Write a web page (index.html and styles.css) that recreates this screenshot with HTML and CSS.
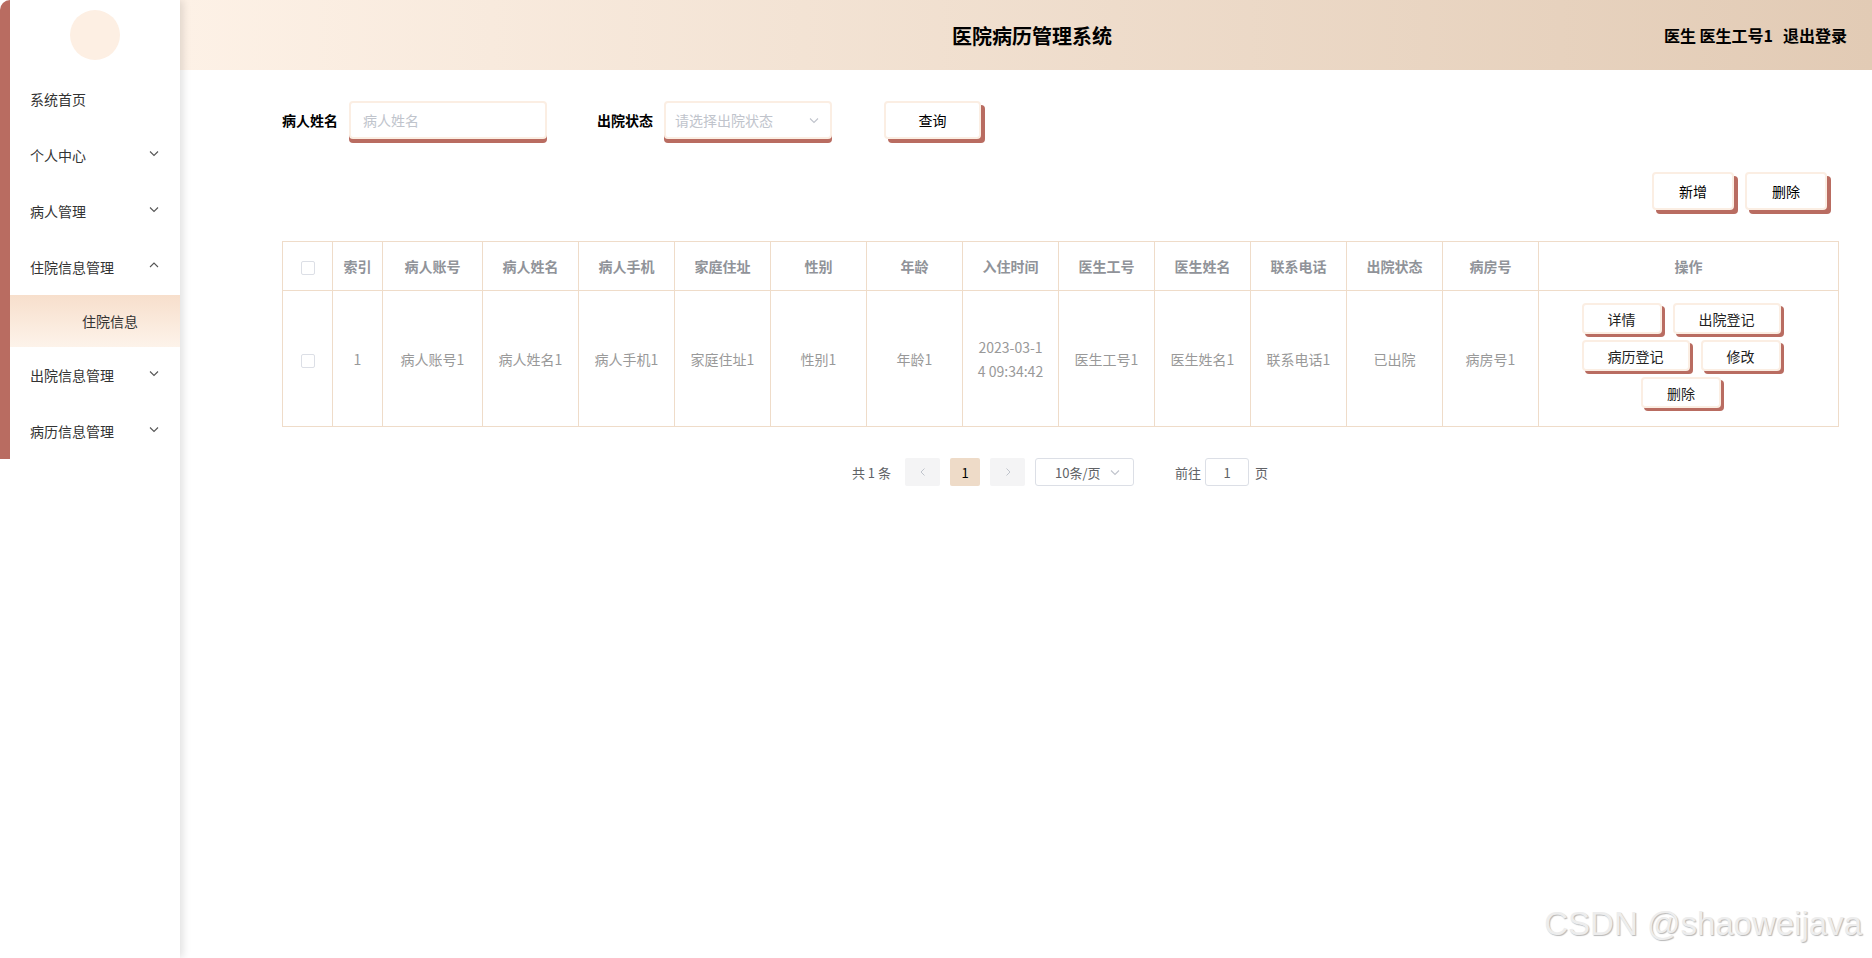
FILE: index.html
```html
<!DOCTYPE html>
<html lang="zh-CN">
<head>
    <meta charset="UTF-8">
    <title>医院病历管理系统</title>
    <link rel="stylesheet" href="styles.css">
</head>
<body>
    <div class="app">
        <!-- 左侧菜单 -->
        <aside class="sidebar">
            <div class="side-inner">
                <div class="logo"><div class="logo-circle"></div></div>
                <ul class="menu">
                    <li class="menu-item">系统首页</li>
                    <li class="menu-item">个人中心
                        <svg class="arrow" viewBox="0 0 12 12"><path d="M2 4.5 6 8.5 10 4.5"/></svg>
                    </li>
                    <li class="menu-item">病人管理
                        <svg class="arrow" viewBox="0 0 12 12"><path d="M2 4.5 6 8.5 10 4.5"/></svg>
                    </li>
                    <li class="menu-item">住院信息管理
                        <svg class="arrow" viewBox="0 0 12 12"><path d="M2 8 6 4 10 8"/></svg>
                    </li>
                    <li class="sub-item">住院信息</li>
                    <li class="menu-item">出院信息管理
                        <svg class="arrow" viewBox="0 0 12 12"><path d="M2 4.5 6 8.5 10 4.5"/></svg>
                    </li>
                    <li class="menu-item">病历信息管理
                        <svg class="arrow" viewBox="0 0 12 12"><path d="M2 4.5 6 8.5 10 4.5"/></svg>
                    </li>
                </ul>
            </div>
        </aside>

        <div class="main">
            <header class="topbar">
                <div></div>
                <h1 class="title">医院病历管理系统</h1>
                <div class="user"><span>医生</span> <span>医生工号1</span><span class="logout">退出登录</span></div>
            </header>

            <div class="content">
                <!-- 查询条件 -->
                <form class="search">
                    <label class="search-label">病人姓名</label>
                    <input class="search-input" type="text" placeholder="病人姓名">
                    <label class="search-label gap">出院状态</label>
                    <div class="search-select">
                        <span>请选择出院状态</span>
                        <svg class="sel-arrow" viewBox="0 0 12 12"><path d="M2 4.5 6 8.5 10 4.5"/></svg>
                    </div>
                    <button type="button" class="btn btn-query">查询</button>
                </form>

                <div class="toolbar">
                    <button type="button" class="btn btn-tool">新增</button>
                    <button type="button" class="btn btn-tool">删除</button>
                </div>

                <!-- 数据表格 -->
                <table class="grid">
                    <colgroup>
                        <col style="width:50px"><col style="width:50px"><col style="width:100px">
                        <col style="width:96px"><col style="width:96px"><col style="width:96px">
                        <col style="width:96px"><col style="width:96px"><col style="width:96px">
                        <col style="width:96px"><col style="width:96px"><col style="width:96px">
                        <col style="width:96px"><col style="width:96px"><col style="width:300px">
                    </colgroup>
                    <thead>
                        <tr>
                            <th><span class="check"></span></th>
                            <th>索引</th>
                            <th>病人账号</th>
                            <th>病人姓名</th>
                            <th>病人手机</th>
                            <th>家庭住址</th>
                            <th>性别</th>
                            <th>年龄</th>
                            <th>入住时间</th>
                            <th>医生工号</th>
                            <th>医生姓名</th>
                            <th>联系电话</th>
                            <th>出院状态</th>
                            <th>病房号</th>
                            <th>操作</th>
                        </tr>
                    </thead>
                    <tbody>
                        <tr>
                            <td><span class="check"></span></td>
                            <td>1</td>
                            <td>病人账号1</td>
                            <td>病人姓名1</td>
                            <td>病人手机1</td>
                            <td>家庭住址1</td>
                            <td>性别1</td>
                            <td>年龄1</td>
                            <td class="wrap">2023-03-14 09:34:42</td>
                            <td>医生工号1</td>
                            <td>医生姓名1</td>
                            <td>联系电话1</td>
                            <td>已出院</td>
                            <td>病房号1</td>
                            <td class="ops-cell">
                                <div class="ops">
                                    <button type="button" class="op-btn">详情</button>
                                    <button type="button" class="op-btn">出院登记</button>
                                    <button type="button" class="op-btn">病历登记</button>
                                    <button type="button" class="op-btn">修改</button>
                                    <button type="button" class="op-btn">删除</button>
                                </div>
                            </td>
                        </tr>
                    </tbody>
                </table>

                <!-- 分页 -->
                <div class="pager">
                    <span class="total">共 1 条</span>
                    <span class="pg-btn pg-side"><svg viewBox="0 0 12 12"><path d="M7.5 2.5 4 6 7.5 9.5"/></svg></span>
                    <span class="pg-btn pg-active">1</span>
                    <span class="pg-btn pg-side"><svg viewBox="0 0 12 12"><path d="M4.5 2.5 8 6 4.5 9.5"/></svg></span>
                    <span class="pg-sizes">10条/页
                        <svg class="sel-arrow" viewBox="0 0 12 12"><path d="M2 4.5 6 8.5 10 4.5"/></svg>
                    </span>
                    <span class="jump">前往</span>
                    <span class="jump-input">1</span>
                    <span class="jump-unit">页</span>
                </div>
            </div>
        </div>

        <div class="watermark">CSDN @shaoweijava</div>
    </div>
</body>
</html>
```

FILE: styles.css
```css
/* 基础 */
:root {
    --red: #b96c61;
    --peach: #fbeee3;
    --line: #efdcc9;
    --gray: #909399;
}

* {
    box-sizing: border-box;
}

body {
    margin: 0;
    font-family: "Noto Sans CJK SC", "Microsoft YaHei", sans-serif;
    color: #333;
    background: #fff;
}

.app {
    display: flex;
    min-height: 100vh;
    position: relative;
}

/* 侧边栏 */
.sidebar {
    width: 180px;
    flex-shrink: 0;
    background: #fff;
    box-shadow: 3px 0 8px rgba(0, 0, 0, 0.12);
    position: relative;
    z-index: 2;
}

.side-inner {
    border-left: 10px solid var(--red);
    border-top-left-radius: 10px;
}

.logo {
    height: 71px;
    padding-top: 10px;
    display: flex;
    justify-content: center;
}

.logo-circle {
    width: 50px;
    height: 50px;
    border-radius: 50%;
    background: #fdefe3;
}

.menu {
    list-style: none;
    margin: 0;
    padding: 0;
}

.menu-item {
    height: 56px;
    padding: 0 20px;
    display: flex;
    align-items: center;
    justify-content: space-between;
    font-size: 14px;
    color: #333;
}

.arrow {
    width: 12px;
    height: 12px;
    margin-top: -4px;
    fill: none;
    stroke: #555;
    stroke-width: 1.1;
}

.sub-item {
    height: 52px;
    padding-left: 72px;
    display: flex;
    align-items: center;
    font-size: 14px;
    color: #333;
    background: linear-gradient(180deg, #f7dfcc, #fdf3ea);
}

/* 主区域 */
.main {
    flex: 1;
    min-width: 0;
}

.topbar {
    height: 70px;
    display: grid;
    grid-template-columns: 1fr auto 1fr;
    align-items: center;
    padding: 0 25px 0 37px;
    background: linear-gradient(90deg, #fdf1e6, #e2cbb5);
}

.title {
    margin: 0;
    font-size: 20px;
    font-weight: bold;
    color: #000;
}

.user {
    justify-self: end;
    font-size: 16px;
    font-weight: bold;
    color: #000;
}

.logout {
    margin-left: 10px;
}

.content {
    padding: 31px 34px 0 102px;
}

/* 查询 */
.search {
    display: flex;
    align-items: center;
    margin: 0;
}

.search-label {
    font-size: 14px;
    font-weight: bold;
    color: #000;
    margin-right: 11px;
}

.search-label.gap {
    margin-left: 50px;
}

.search-input,
.search-select {
    height: 38px;
    border: 2px solid var(--peach);
    border-radius: 4px;
    box-shadow: 0 4px 0 var(--red);
    background: #fff;
    font-size: 14px;
    font-family: inherit;
}

.search-input {
    width: 198px;
    padding: 0 12px;
    outline: none;
}

.search-input::placeholder {
    color: #c0c4cc;
}

.search-select {
    width: 168px;
    padding: 0 10px 0 9px;
    display: flex;
    align-items: center;
    justify-content: space-between;
    color: #c0c4cc;
}

.sel-arrow {
    width: 12px;
    height: 12px;
    fill: none;
    stroke: #c0c4cc;
    stroke-width: 1.1;
}

.btn {
    height: 38px;
    border: 2px solid var(--peach);
    border-radius: 4px;
    background: #fff;
    box-shadow: 4px 4px 0 var(--red);
    font-size: 14px;
    font-family: inherit;
    color: #000;
    cursor: pointer;
}

.btn-query {
    width: 97px;
    margin-left: 52px;
}

.toolbar {
    display: flex;
    justify-content: flex-end;
    gap: 11px;
    margin-top: 33px;
    padding-right: 11px;
}

.btn-tool {
    width: 82px;
}

/* 表格 */
.grid {
    width: 100%;
    margin-top: 31px;
    border-collapse: collapse;
    table-layout: fixed;
}

.grid th,
.grid td {
    border: 1px solid var(--line);
    text-align: center;
    vertical-align: middle;
    font-size: 14px;
    padding: 0 10px;
}

.grid th {
    height: 49px;
    color: var(--gray);
    font-weight: bold;
}

.grid td {
    height: 136px;
    color: #999;
    line-height: 24px;
}

.grid td.wrap {
    padding: 0 14px;
    word-break: break-all;
}

.check {
    display: inline-block;
    width: 14px;
    height: 14px;
    border: 1px solid #dcdfe6;
    border-radius: 2px;
    background: #fff;
    vertical-align: middle;
}

.grid td.ops-cell {
    padding: 10px 17px 16px 2px;
}

.ops {
    display: flex;
    flex-wrap: wrap;
    justify-content: center;
    gap: 6px 11px;
}

.op-btn {
    height: 31px;
    padding: 0 24px;
    border: 2px solid var(--peach);
    border-radius: 4px;
    background: #fff;
    box-shadow: 3px 3px 0 var(--red);
    font-size: 14px;
    font-family: inherit;
    color: #222;
    cursor: pointer;
}

/* 分页 */
.pager {
    display: flex;
    justify-content: center;
    align-items: center;
    margin: 31px 0 0 0;
    height: 28px;
    font-size: 13px;
    color: #606266;
}

.total {
    margin-right: 14px;
}

.pg-btn {
    height: 28px;
    border-radius: 2px;
    display: flex;
    align-items: center;
    justify-content: center;
    margin-right: 10px;
}

.pg-side {
    width: 35px;
    background: #f4f4f5;
}

.pg-side svg {
    width: 12px;
    height: 12px;
    fill: none;
    stroke: #c0c4cc;
    stroke-width: 1;
}

.pg-active {
    width: 30px;
    background: #eedbc8;
    color: #000;
}

.pg-sizes {
    width: 99px;
    height: 28px;
    border: 1px solid #dcdfe6;
    border-radius: 3px;
    display: flex;
    align-items: center;
    justify-content: space-between;
    padding: 0 12px 0 19px;
}

.jump {
    margin-left: 41px;
    margin-right: 4px;
}

.jump-input {
    width: 44px;
    height: 28px;
    border: 1px solid #dcdfe6;
    border-radius: 3px;
    display: flex;
    align-items: center;
    justify-content: center;
    color: #606266;
}

.jump-unit {
    margin-left: 6px;
}

/* 水印 */
.watermark {
    position: absolute;
    right: 10px;
    top: 905px;
    font-family: "Liberation Sans", Arial, sans-serif;
    font-size: 33px;
    color: #ededed;
    text-shadow: 1px 1px 1px #b8b8b8;
    pointer-events: none;
}
```
